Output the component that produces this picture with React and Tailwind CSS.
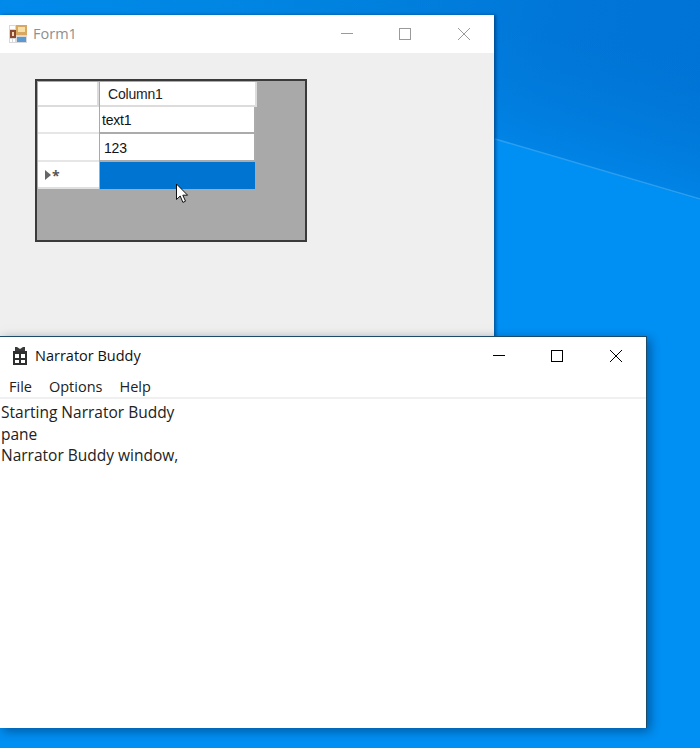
function Wallpaper() {
  return (
    <svg className="absolute inset-0" width="700" height="748" viewBox="0 0 700 748">
      <defs>
        <linearGradient id="sky" x1="0" y1="0" x2="700" y2="200" gradientUnits="userSpaceOnUse">
          <stop offset="0" stopColor="#0098ec" />
          <stop offset="0.75" stopColor="#0076d8" />
          <stop offset="1" stopColor="#0074d6" />
        </linearGradient>
        <linearGradient id="haze" x1="600" y1="30" x2="560" y2="170" gradientUnits="userSpaceOnUse">
          <stop offset="0" stopColor="#0078d8" stopOpacity="0" />
          <stop offset="1" stopColor="#0088ea" stopOpacity="0.9" />
        </linearGradient>
      </defs>
      <rect width="700" height="748" fill="#0090f4" />
      <polygon points="0,0 700,0 700,200 495,139 0,139" fill="url(#sky)" />
      <polygon points="0,0 700,0 700,200 495,139 0,139" fill="url(#haze)" />
      <line x1="495" y1="139" x2="700" y2="199" stroke="#2a9ff0" strokeWidth="1.5" />
    </svg>
  );
}

function FormIcon() {
  return (
    <svg width="18" height="18" viewBox="0 0 18 18" className="shrink-0">
      <rect width="18" height="18" fill="#d8d8d8" />
      <rect x="1" y="1" width="5" height="3" fill="#fff" />
      <rect x="1" y="5" width="6" height="8" fill="#8a4a30" />
      <rect x="3" y="7" width="2" height="4" fill="#f0d8b0" />
      <rect x="7" y="0" width="11" height="10" fill="#d9a860" />
      <rect x="9" y="2" width="7" height="5" fill="#f6e0a8" />
      <rect x="8" y="12" width="9" height="5" fill="#5a9ad0" />
      <rect x="1" y="14" width="2" height="3" fill="#fff" />
      <rect x="4" y="14" width="2" height="3" fill="#fff" />
    </svg>
  );
}

function GiftIcon() {
  return (
    <svg width="16" height="18" viewBox="0 0 16 18" className="shrink-0">
      <path d="M3 0 H5 L8 2 L11 0 H13 V4 H3 Z" fill="#3a3a3a" />
      <rect x="1" y="4" width="14" height="14" fill="#2f2f2f" />
      <rect x="3" y="7" width="4" height="4" fill="#fff" />
      <rect x="9" y="7" width="4" height="4" fill="#fff" />
      <rect x="3" y="13" width="4" height="3" fill="#fff" />
      <rect x="9" y="13" width="4" height="3" fill="#fff" />
    </svg>
  );
}

function WinButtons({ color }) {
  return (
    <div className="flex items-center h-full">
      <svg width="58" height="38" viewBox="0 0 58 38">
        <line x1="21" y1="18.5" x2="33" y2="18.5" stroke={color} />
      </svg>
      <svg width="58" height="38" viewBox="0 0 58 38">
        <rect x="21.5" y="13.5" width="11" height="11" fill="none" stroke={color} />
      </svg>
      <svg width="58" height="38" viewBox="0 0 58 38">
        <path d="M22 13 L34 25 M34 13 L22 25" stroke={color} />
      </svg>
    </div>
  );
}

function Cursor() {
  return (
    <svg width="15" height="21" viewBox="0 0 15 21" className="absolute left-[175px] top-[183px]">
      <path d="M1.5 1 V16.5 L5.2 13 L7.9 19.4 L10.5 18.2 L7.8 12.2 H12.6 Z" fill="#fff" stroke="#111" strokeWidth="1" />
    </svg>
  );
}

function HeaderCell({ className, children }) {
  return (
    <div className={`bg-white border-r-2 border-b-2 border-[#dcdcdc] flex items-center ${className}`}>
      {children}
    </div>
  );
}

function Row({ height, text, pad }) {
  return (
    <div className={`flex ${height}`}>
      <div className="w-[61px] bg-white border-b-2 border-[#e6e6e6]" />
      <div className="w-[156px] ml-px bg-white border-b-2 border-r-2 border-[#ababab] flex items-center pt-[2px]">
        <span className={`font-['Liberation_Sans',sans-serif] text-[14px] text-[#111] tracking-[-0.2px] ${pad}`}>{text}</span>
      </div>
    </div>
  );
}

function DataGrid() {
  return (
    <div className="mt-[26px] ml-[35px] w-[272px] h-[163px] border-2 border-[#3a3a3a] bg-[#a9a9a9] pl-px pt-px">
      <div className="flex h-[25px]">
        <HeaderCell className="w-[61px]" />
        <HeaderCell className="w-[157px] ml-px pl-2 pt-[2px]">
          <span className="font-['Liberation_Sans',sans-serif] text-[14px] text-[#222] tracking-[-0.2px]">Column1</span>
        </HeaderCell>
      </div>
      <Row height="h-[27px]" text="text1" pad="pl-[2px]" />
      <Row height="h-[28px]" text="123" pad="pl-[4px]" />
      <div className="flex h-[27px]">
        <div className="w-[61px] bg-white border-b-2 border-[#e0e0e0] flex items-center pl-[7px]">
          <span className="w-0 h-0 border-y-[5px] border-y-transparent border-l-[6px] border-l-[#666]" />
          <span className="text-[14px] leading-none font-bold text-[#555] mt-[3px] ml-px">*</span>
        </div>
        <div className="w-[155px] ml-px bg-[#0074d1]" />
      </div>
    </div>
  );
}

function Form1() {
  return (
    <div className="absolute left-0 top-[15px] w-[494px] h-[340px] bg-[#efefef] shadow-[2px_0_3px_rgba(0,40,90,0.55)]">
      <div className="h-[38px] bg-white flex items-center justify-between">
        <div className="flex items-center gap-[6px] pl-[9px]">
          <FormIcon />
          <span className="text-[14.5px] text-[#8f8f8f]">Form1</span>
        </div>
        <WinButtons color="#9a9a9a" />
      </div>
      <DataGrid />
    </div>
  );
}

function NarratorBuddy() {
  return (
    <div className="absolute left-0 top-[336px] w-[647px] h-[392px] bg-white border-t border-r border-[#1c4a6b] flex flex-col shadow-[3px_3px_10px_rgba(0,30,70,0.5)]">
      <div className="h-[38px] flex items-center justify-between shrink-0">
        <div className="flex items-center gap-[7px] pl-[12px]">
          <GiftIcon />
          <span className="text-[14.5px] text-[#111]">Narrator Buddy</span>
        </div>
        <WinButtons color="#000" />
      </div>
      <div className="h-[24px] flex items-center gap-[17px] pl-[9px] pt-[2px] border-b-2 border-[#f0f0f0] text-[14.5px] text-[#222] shrink-0">
        <span>File</span>
        <span>Options</span>
        <span>Help</span>
      </div>
      <div className="pl-px pt-[3px] text-[15.5px] leading-[21.5px] text-[#222]">
        <div>Starting Narrator Buddy</div>
        <div>pane</div>
        <div>Narrator Buddy window,</div>
      </div>
    </div>
  );
}

export default function App() {
  return (
    <div className="relative w-[700px] h-[748px] overflow-hidden font-['Open_Sans','Noto_Sans',sans-serif]">
      <Wallpaper />
      <Form1 />
      <Cursor />
      <NarratorBuddy />
    </div>
  );
}
